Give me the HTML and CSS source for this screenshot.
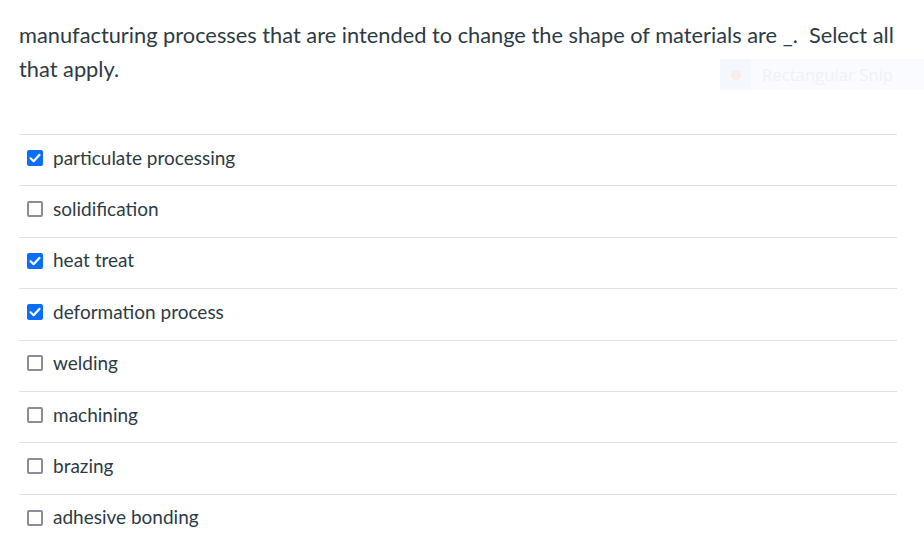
FILE: index.html
```html
<!DOCTYPE html>
<html>
<head>
<meta charset="utf-8">
<link rel="stylesheet" href="styles.css">
</head>
<body>

<div class="question">
<p class="question-text">manufacturing processes that are intended to change the shape of materials are _.&nbsp; Select all that apply.</p>

<div class="answers">
<label class="answer"><span class="box checked"></span> particulate processing</label>
<label class="answer"><span class="box"></span> solidification</label>
<label class="answer"><span class="box checked"></span> heat treat</label>
<label class="answer"><span class="box checked"></span> deformation process</label>
<label class="answer"><span class="box"></span> welding</label>
<label class="answer"><span class="box"></span> machining</label>
<label class="answer"><span class="box"></span> brazing</label>
<label class="answer"><span class="box"></span> adhesive bonding</label>
</div>
</div>

<!-- snip overlay -->
<div class="snip">
<div class="snip-icon"><span class="dot"></span></div>
<span class="snip-label">Rectangular Snip</span>
</div>

</body>
</html>
```

FILE: styles.css
```css
body {
margin: 0;
padding: 0 27px 0 19px;
font-family: Lato, "Noto Sans", sans-serif;
color: #2d3b45;
background-color: #ffffff;
}
.question-text {
margin: 18px 0 0 0;
font-size: 21.8px;
line-height: 34px;
}
.answers {
margin-top: 48px;
}
.answer {
display: flex;
align-items: center;
gap: 10px;
border-top: 1px solid #e0e3e6;
padding: 11.5px 0 16.5px 8px;
font-size: 19px;
line-height: 22.4px;
}
.box {
width: 16px;
height: 16px;
box-sizing: border-box;
border: 2px solid #8b8b9c;
border-radius: 2px;
flex-shrink: 0;
}
.box.checked {
border: none;
background-color: #0b6ef8;
background-image: url("data:image/svg+xml;utf8,<svg xmlns='http://www.w3.org/2000/svg' viewBox='0 0 16 16'><path d='M3.6 8.3 L6.6 11.2 L12.4 4.9' fill='none' stroke='white' stroke-width='2.2' stroke-linecap='round' stroke-linejoin='round'/></svg>");
}
.snip {
position: absolute;
left: 720px;
top: 59px;
width: 204px;
height: 31px;
background-color: #f9fbfe;
display: flex;
align-items: center;
}
.snip-icon {
width: 31px;
height: 31px;
background-color: #f4f8fc;
display: flex;
align-items: center;
justify-content: center;
}
.dot {
width: 10px;
height: 10px;
border-radius: 50%;
background-color: #f8ede9;
}
.snip-label {
margin-left: 11px;
font-size: 16.7px;
color: #eef2f7;
font-family: "Open Sans", sans-serif;
}
```
